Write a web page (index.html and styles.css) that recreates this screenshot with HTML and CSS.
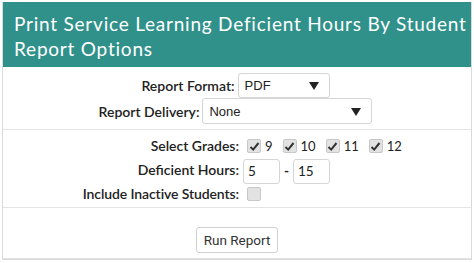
FILE: index.html
```html
<!DOCTYPE html>
<html lang="en">
<head>
    <meta charset="UTF-8">
    <title>Print Service Learning Deficient Hours By Student</title>
    <link rel="stylesheet" href="styles.css">
</head>
<body>
    <div class="panel">
        <div class="panel-header">
            Print Service Learning Deficient Hours By Student<br>
            Report Options
        </div>

        <div class="section section-format">
            <div class="line">
                <label class="label">Report Format:</label>
                <div class="select select-format">
                    <span>PDF</span>
                    <svg class="caret" width="10" height="8" viewBox="0 0 10 8"><path d="M0 0H10L5 8Z" fill="#222"/></svg>
                </div>
            </div>
            <div class="line">
                <label class="label">Report Delivery:</label>
                <div class="select select-delivery">
                    <span>None</span>
                    <svg class="caret" width="10" height="8" viewBox="0 0 10 8"><path d="M0 0H10L5 8Z" fill="#222"/></svg>
                </div>
            </div>
        </div>

        <div class="section section-options">
            <div class="form-grid">
                <div class="label">Select Grades:</div>
                <div class="field grades">
                    <span class="check on"><svg width="11" height="11" viewBox="0 0 11 11"><path d="M1.5 6 L4.2 8.6 L9.5 2" fill="none" stroke="#333" stroke-width="2"/></svg></span><span class="grade">9</span>
                    <span class="check on"><svg width="11" height="11" viewBox="0 0 11 11"><path d="M1.5 6 L4.2 8.6 L9.5 2" fill="none" stroke="#333" stroke-width="2"/></svg></span><span class="grade">10</span>
                    <span class="check on"><svg width="11" height="11" viewBox="0 0 11 11"><path d="M1.5 6 L4.2 8.6 L9.5 2" fill="none" stroke="#333" stroke-width="2"/></svg></span><span class="grade">11</span>
                    <span class="check on"><svg width="11" height="11" viewBox="0 0 11 11"><path d="M1.5 6 L4.2 8.6 L9.5 2" fill="none" stroke="#333" stroke-width="2"/></svg></span><span class="grade">12</span>
                </div>

                <div class="label">Deficient Hours:</div>
                <div class="field hours">
                    <input class="num" type="text" value="5">
                    <span class="dash">-</span>
                    <input class="num" type="text" value="15">
                </div>

                <div class="label">Include Inactive Students:</div>
                <div class="field">
                    <span class="check"></span>
                </div>
            </div>
        </div>

        <div class="section section-run">
            <button class="run-button">Run Report</button>
        </div>
    </div>
</body>
</html>
```

FILE: styles.css
```css
/* General Styles */
body {
    margin: 0;
    padding: 0;
    background-color: #FFFFFF;
    font-family: Lato, "Open Sans", sans-serif;
    color: #222222;
}
.panel {
    width: 468px;
    margin: 2px 0 0 2px;
    border: 1px solid #DADADA;
    border-top: none;
}
.panel-header {
    background-color: #30918B;
    color: #FFFFFF;
    font-size: 19px;
    line-height: 25px;
    letter-spacing: 0.78px;
    white-space: nowrap;
    padding: 9px 0 6px 11px;
    height: 50px;
}

/* Sections */
.section {
    border-bottom: 1px solid #E4E4E4;
}
.section-format {
    height: 56px;
    padding-top: 6px;
}
.line {
    display: flex;
    justify-content: center;
    align-items: center;
    margin-left: -3px;
}
.label {
    font-size: 14px;
    font-weight: 600;
    color: #222222;
    text-align: right;
    white-space: nowrap;
}
.form-grid .label:nth-of-type(5) {
    letter-spacing: -0.1px;
}
.line .label {
    margin-right: 3px;
}
.select {
    display: flex;
    align-items: center;
    justify-content: space-between;
    box-sizing: border-box;
    border: 1px solid #D6D6D6;
    border-radius: 3px;
    background-color: #FFFFFF;
    font-family: "Liberation Sans", Arial, sans-serif;
    font-size: 13px;
    color: #222222;
    padding: 0 10px 0 6px;
}
.select-format {
    width: 92px;
    height: 25px;
}
.select-delivery {
    width: 170px;
    height: 26px;
}
.caret {
    margin-top: 1px;
}

.section-options {
    height: 77px;
}
.form-grid {
    display: grid;
    grid-template-columns: 160px auto;
    column-gap: 8px;
    row-gap: 0;
    margin-left: 76px;
    padding-top: 8px;
    align-items: center;
}
.form-grid .label {
    line-height: 16px;
}
.field {
    display: flex;
    align-items: center;
    font-family: Lato, "Open Sans", sans-serif;
    font-size: 13.5px;
}
.grades {
    height: 16px;
}
.check {
    display: inline-flex;
    align-items: center;
    justify-content: center;
    width: 12px;
    height: 12px;
    border: 1px solid #C8C8C8;
    border-radius: 2px;
    background-color: #E2E2E2;
}
.grade {
    font-size: 13px;
    margin-left: 4px;
    margin-right: 10px;
}
.hours {
    height: 28px;
    margin: 3px 0 1px -4px;
}
.num {
    box-sizing: border-box;
    width: 37px;
    height: 25px;
    border: 1px solid #D6D6D6;
    border-radius: 3px;
    padding: 0 4px;
    font-family: Lato, "Open Sans", sans-serif;
    font-size: 13.5px;
    color: #222222;
    outline: none;
}
.dash {
    width: 13px;
    text-align: center;
    font-weight: 700;
}

.section-run {
    height: 50px;
    display: flex;
    justify-content: center;
    align-items: flex-start;
}
.run-button {
    margin-top: 19px;
    margin-left: 0;
    width: 82px;
    height: 26px;
    border: 1px solid #D0D0D0;
    border-radius: 3px;
    background-color: #FFFFFF;
    font-family: Roboto, "Open Sans", sans-serif;
    font-size: 13.5px;
    color: #333333;
    padding: 0;
    cursor: pointer;
}
```
